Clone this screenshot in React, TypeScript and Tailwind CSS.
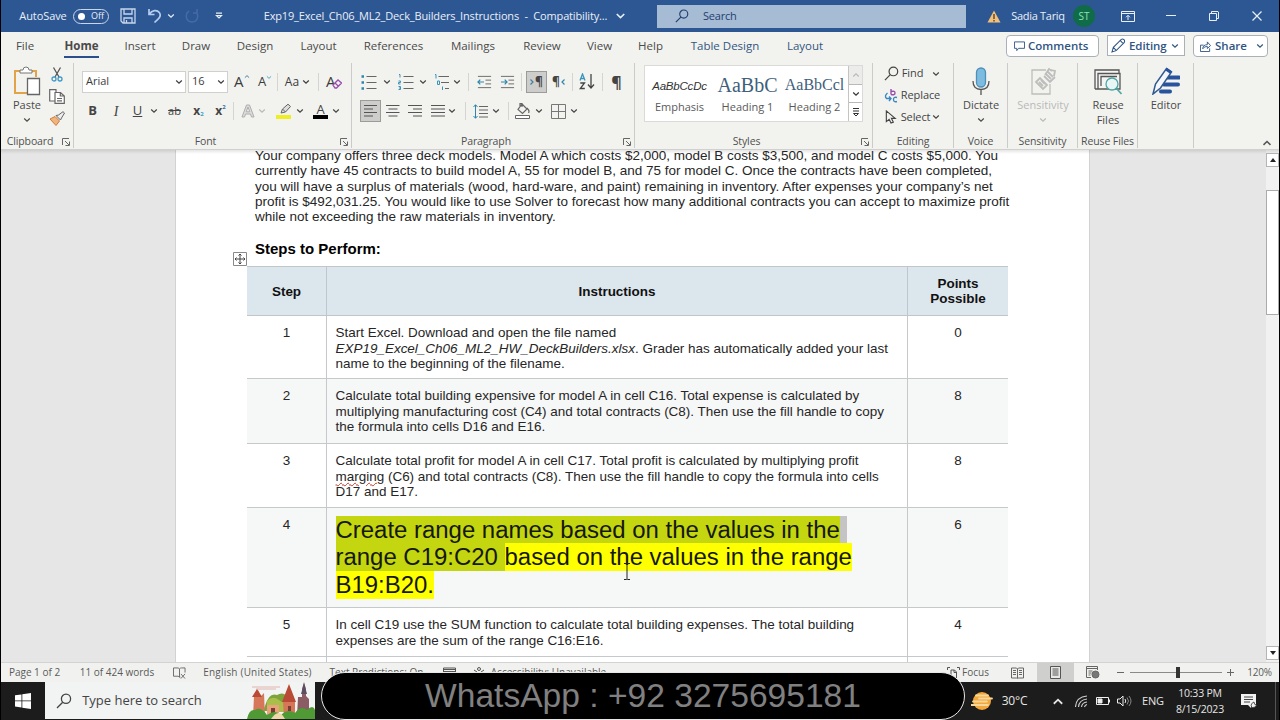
import type { ReactNode } from 'react';
import clsx from 'clsx';

type IconProps = { className?: string };

function Chevron({ className }: IconProps) {
  return (
    <svg viewBox="0 0 8 6" className={clsx('h-[6px] w-[8px] shrink-0', className)} fill="none" stroke="currentColor" strokeWidth="1.200">
      <path d="M1.2 1.5 4 4.2 6.8 1.5" />
    </svg>
  );
}

function Divider({ className }: IconProps) {
  return <div className={clsx('h-[18px] w-px shrink-0 bg-[#d4d4d2]', className)} />;
}

function Label({ className, children }: { className?: string; children: ReactNode }) {
  return <div className={clsx('flex shrink-0 justify-center whitespace-nowrap', className)}>{children}</div>;
}

function SearchIcon({ className }: IconProps) {
  return (
    <svg viewBox="0 0 16 16" className={clsx('shrink-0', className)} fill="none" stroke="currentColor" strokeWidth="1.3">
      <circle cx="10" cy="5.8" r="4.6" />
      <path d="M6.7 9.2 1 15" />
    </svg>
  );
}

function TitleBar() {
  return (
    <header className="flex h-8 shrink-0 items-center bg-[#2d5793] text-[11px] text-[#e9eff8]">
      <Label className="ml-[18px] w-[48px] tracking-[-0.1px]">AutoSave</Label>
      <div className="ml-[6px] flex h-[15px] w-[36px] shrink-0 items-center rounded-full border border-[#c9d6ea] pl-[4px] text-[9px]">
        <span className="h-[7px] w-[7px] rounded-full bg-white" />
        <span className="ml-[6px]">Off</span>
      </div>
      <svg viewBox="0 0 16 16" className="ml-[11px] h-4 w-4 shrink-0" fill="none" stroke="#c8d6ec" strokeWidth="1.3">
        <path d="M1 1h14v14H3l-2-2zM4 1v5h8V1M4 15v-5h8v5M6.500 12v3" />
      </svg>
      <svg viewBox="0 0 16 16" className="ml-[11px] h-4 w-4 shrink-0" fill="none" stroke="#b6cdf0" strokeWidth="1.7">
        <path d="M2 1v5.500h5.500M2.300 6.200C5 2 10 1.500 12.300 4.500c2 2.700.5 5-1.500 6.800L7.500 14.500" />
      </svg>
      <Chevron className="ml-[4px]" />
      <svg viewBox="0 0 16 16" className="ml-[9px] h-4 w-4 shrink-0" fill="none" stroke="#446ba5" strokeWidth="1.6">
        <path d="M13 1v4H9M13 5c2 4 0 9-5 9S1 9 3 5l2-2" />
      </svg>
      <svg viewBox="0 0 8 8" className="ml-[15px] h-2 w-2 shrink-0" fill="none" stroke="currentColor" strokeWidth="1.200">
        <path d="M1 1.200h6M1.500 3.500 4 6l2.500-2.500z" />
      </svg>
      <Label className="ml-[41px] w-[343px] whitespace-pre tracking-[-0.15px]">
        Exp19_Excel_Ch06_ML2_Deck_Builders_Instructions  -  Compatibility...
      </Label>
      <Chevron className="ml-[8px] !h-[8px] !w-[11px]" />
      <div className="ml-[31px] flex h-[23px] w-[309px] shrink-0 items-center bg-[#a6bbd4] text-[#1f3f70]">
        <SearchIcon className="ml-[18px] h-[14px] w-[14px]" />
        <span className="ml-[14px] tracking-[-0.2px]">Search</span>
      </div>
      <svg viewBox="0 0 14 13" className="ml-[21px] h-[13px] w-[14px] shrink-0">
        <path d="M7 .5 13.500 12.500H.5z" fill="#f2c078" />
        <path d="M7 4v5M7 10v1.500" stroke="#4a3a2a" strokeWidth="1.300" />
      </svg>
      <Label className="ml-[11px] w-[52px] tracking-[-0.3px]">Sadia Tariq</Label>
      <div className="ml-[9px] flex h-[22px] w-[22px] shrink-0 items-center justify-center rounded-full bg-[#0f6b48] text-[10px] text-[#8fe0b4]">
        ST
      </div>
      <svg viewBox="0 0 14 11" className="ml-[26px] h-[11px] w-[14px] shrink-0" fill="none" stroke="currentColor">
        <path d="M.5.5h13v10H.5zM.5 2.500h13M7 9V4.500M5 6.300l2-2 2 2" />
      </svg>
      <svg viewBox="0 0 10 10" className="ml-[31px] h-[10px] w-[10px] shrink-0" stroke="currentColor">
        <path d="M0 4.500h10" />
      </svg>
      <svg viewBox="0 0 10 10" className="ml-[33px] h-[10px] w-[10px] shrink-0" fill="none" stroke="currentColor">
        <path d="M.5 2.500h7v7h-7zM2.500 2.500V.5h6.500l.5.5v6.500h-2" />
      </svg>
      <svg viewBox="0 0 10 10" className="ml-[33px] h-[10px] w-[10px] shrink-0" stroke="currentColor" strokeWidth="1.200">
        <path d="m.5.5 9 9M9.500.5l-9 9" />
      </svg>
    </header>
  );
}

const TABS = [
  { label: 'File', cls: 'ml-[15px] w-[18px]' },
  { label: 'Home', cls: 'ml-[30px] w-[35px] font-bold', active: true },
  { label: 'Insert', cls: 'ml-[26px] w-[30px]' },
  { label: 'Draw', cls: 'ml-[27px] w-[28px]' },
  { label: 'Design', cls: 'ml-[26px] w-[38px]' },
  { label: 'Layout', cls: 'ml-[27px] w-[35px]' },
  { label: 'References', cls: 'ml-[28px] w-[59px]' },
  { label: 'Mailings', cls: 'ml-[27px] w-[46px]' },
  { label: 'Review', cls: 'ml-[27px] w-[38px]' },
  { label: 'View', cls: 'ml-[26px] w-[25px]' },
  { label: 'Help', cls: 'ml-[26px] w-[25px]' },
  { label: 'Table Design', cls: 'ml-[27px] w-[70px] text-[#33557f]' },
  { label: 'Layout', cls: 'ml-[27px] w-[36px] text-[#33557f]' },
];

function TabBar() {
  return (
    <nav className="flex h-[31px] shrink-0 items-center text-[11.5px] text-[#4a4a4a]">
      {TABS.map((tab, i) => (
        <div key={i} className={clsx('relative flex h-full shrink-0 items-center justify-center whitespace-nowrap pb-[3px]', tab.cls)}>
          {tab.label}
          {tab.active && <span className="absolute bottom-[5px] left-0 h-[2px] w-full bg-[#2b4f8c]" />}
        </div>
      ))}
      <div className="mb-[3px] ml-auto mr-[11px] flex gap-[8px] font-semibold text-[#2f5582]">
        <div className="flex h-[22px] w-[93px] items-center rounded-sm border border-[#a9b0b8] bg-white pl-[7px]">
          <svg viewBox="0 0 12 11" className="mr-[3px] h-[11px] w-[11px]" fill="none" stroke="currentColor">
            <path d="M.5.5h11v7H5L3 10V7.500H.5z" />
          </svg>
          Comments
        </div>
        <div className="flex h-[21px] w-[78px] items-center border border-[#a9b0b8] bg-white pl-[3px]">
          <svg viewBox="0 0 16 16" className="mr-[3px] h-[15px] w-[15px]" fill="none" stroke="currentColor" strokeWidth="1.100">
            <path d="M1 15 2.500 10 11 1.500q1.500-1 2.800.3T14 5L5.500 13.500zM2.500 10l3 3.200M10 2.800l3 3.200" />
          </svg>
          <span className="tracking-[-0.1px]">Editing</span>
          <Chevron className="ml-[4px]" />
        </div>
        <div className="flex h-[22px] w-[75px] items-center rounded-sm border border-[#a9b0b8] bg-white pl-[6px]">
          <svg viewBox="0 0 12 12" className="mr-[4px] h-[11px] w-[11px]" fill="none" stroke="currentColor">
            <path d="M4 4.500H.5v7h10V8M3 8.500c0-3 2-4.500 5-4.500V1l3.500 4L8 8.200V6C6 6 4.500 6.500 3 8.500z" />
          </svg>
          Share
          <Chevron className="ml-[9px]" />
        </div>
      </div>
    </nav>
  );
}

function Group({ title, width, launcher, children }: { title: string; width: string; launcher?: boolean; children: ReactNode }) {
  return (
    <section className={clsx('flex h-[85px] shrink-0 flex-col border-r border-[#cbcbc9]', width)}>
      <div className="h-[73px]">{children}</div>
      <div className="flex h-[12px] items-center">
        <div className={clsx('flex flex-1 justify-center whitespace-nowrap text-[10.5px] tracking-[-0.1px] text-[#505050]', launcher && 'pr-[3px]')}>
          {title}
        </div>
        {launcher && (
          <svg viewBox="0 0 8 8" className="mr-[3px] h-[8px] w-[8px]" fill="none" stroke="#666">
            <path d="M.5 7V.5H7M3 3l4 4M7.500 3.500v4h-4" />
          </svg>
        )}
      </div>
    </section>
  );
}

function ClipboardGroup() {
  return (
    <Group title="Clipboard" width="w-[73px]" launcher>
      <div className="flex">
        <div className="ml-[11px] flex w-[30px] flex-col items-center text-[11px] text-[#4a4a4a]">
          <svg viewBox="0 0 28 30" className="mt-[3px] h-[30px] w-[28px]" fill="none">
            <path d="M8 5H2v22h13M19 5h4v6" stroke="#e3a348" strokeWidth="2" />
            <path d="M7 7V4h3q0-3 3-3t3 3h3v3z" fill="#fff" stroke="#777" />
            <path d="M14.500 12.500h12v16h-12z" fill="#fff" stroke="#666" strokeWidth="1.300" />
          </svg>
          <span className="mt-[1px] leading-[16px]">Paste</span>
          <Chevron className="mt-[4px]" />
        </div>
        <div className="ml-[7px] flex flex-col items-center gap-[7px] pt-[4px]">
          <svg viewBox="0 0 12 15" className="h-[15px] w-[12px]" fill="none">
            <path d="M2.500.5 8 10M9.500.5 4 10" stroke="#555" strokeWidth="1.300" />
            <circle cx="3" cy="12" r="2" stroke="#3f9ac9" strokeWidth="1.300" />
            <circle cx="9" cy="12" r="2" stroke="#3f9ac9" strokeWidth="1.300" />
          </svg>
          <svg viewBox="0 0 16 15" className="h-[15px] w-[16px]" fill="#fff" stroke="#666" strokeWidth="1.200">
            <path d="M6 12H.7V.7H7V3" />
            <path d="M6 3.500h5.500L15.300 7v7.300H6zM11.300 3.500V7h4M8 9.500h5M8 11.800h5" />
          </svg>
          <svg viewBox="0 0 16 15" className="h-[15px] w-[16px]">
            <path d="m1 8 5-2.500L10.500 10 7 14.500z" fill="#f0b57c" stroke="#d1793a" />
            <path d="m7 4.500 4.500 4.500 1-2L15.500 2 14 .7 9.500 4z" fill="#eee" stroke="#666" />
          </svg>
        </div>
      </div>
    </Group>
  );
}

function FontGroup() {
  return (
    <Group title="Font" width="w-[278px]" launcher>
      <div className="flex h-[37px] items-center pl-[8px] text-[11px] text-[#3c3c3c]">
        <div className="flex h-[22px] w-[104px] items-center justify-between border border-[#d0d0ce] bg-white px-[3px]">
          Arial <Chevron className="-mr-[1px]" />
        </div>
        <div className="ml-[2px] flex h-[22px] w-[40px] items-center justify-between border border-[#d0d0ce] bg-white px-[3px]">
          16 <Chevron className="-mr-[1px]" />
        </div>
        <div className="ml-[6px] flex w-[14px] text-[15px] leading-none">
          A<Chevron className="rotate-180 !h-[5px] !w-[6px] text-[#3a6f9f]" />
        </div>
        <div className="ml-[10px] flex w-[14px] text-[13px] leading-none">
          A<Chevron className="!h-[5px] !w-[6px] text-[#3a9fc0]" />
        </div>
        <Divider className="ml-[5px]" />
        <Label className="ml-[6px] w-[16px] text-[12px]">Aa</Label>
        <Chevron className="ml-[2px]" />
        <Divider className="ml-[8px]" />
        <div className="ml-[7px] flex w-[16px] items-end text-[15px] leading-none">
          A
          <svg viewBox="0 0 10 10" className="-ml-[4px] h-[10px] w-[10px] shrink-0" fill="#f2f2ef" stroke="#9a4fae" strokeWidth="1.300">
            <path d="M1 6 6 1l3.500 3-5 5H3zM3 4l3.500 3.200" />
          </svg>
        </div>
      </div>
      <div className="flex h-[22px] items-center pl-[14px] text-[13px] text-[#444]">
        <Label className="w-[9px] font-bold">B</Label>
        <Label className="ml-[15px] w-[8px] font-['Liberation_Serif'] text-[14px] italic">I</Label>
        <Label className="ml-[13px] w-[9px] underline">U</Label>
        <Chevron className="ml-[8px]" />
        <Label className="ml-[10px] w-[13px] text-[11px] line-through">ab</Label>
        <Label className="ml-[12px] w-[11px] items-end font-bold text-[12px] leading-[16px]">
          x<span className="-mb-[3px] text-[6px] text-[#3a9fc0]">2</span>
        </Label>
        <Label className="ml-[11px] w-[11px] font-bold text-[12px] leading-[16px]">
          x<span className="-mt-[4px] text-[6px] text-[#3a6f9f]">2</span>
        </Label>
        <Divider className="ml-[7px]" />
        <svg viewBox="0 0 14 14" className="ml-[7px] h-[14px] w-[14px] shrink-0" fill="#ddd" stroke="#adadab">
          <path d="M1 13 5.500 1h3L13 13h-2.500l-1-3h-5l-1 3zM5.200 7.800h3.600L7 3z" />
        </svg>
        <Chevron className="ml-[3px] text-[#b9b9b7]" />
        <svg viewBox="0 0 18 16" className="ml-[9px] h-[16px] w-[18px] shrink-0" fill="none">
          <path d="M1 12h15v4H1z" fill="#eeee22" />
          <path d="m6 10 1.500-4L13 1.200l2.500 2.300-5 5.500zM7.500 6l3 3" fill="#ddd" stroke="#666" />
        </svg>
        <Chevron className="ml-[3px]" />
        <div className="ml-[9px] flex w-[15px] flex-col items-center">
          <span className="text-[13px] leading-[12px]">A</span>
          <span className="h-[4px] w-full bg-black" />
        </div>
        <Chevron className="ml-[4px]" />
      </div>
    </Group>
  );
}

function ListIcon({ className, numbered }: { className?: string; numbered?: boolean }) {
  return (
    <svg viewBox="0 0 16 16" className={clsx('h-[16px] w-[16px] shrink-0', className)} fill="none" stroke="#666">
      <path d="M5.500 2.500H15.500M5.500 8.500H15.500M5.500 14.500H15.500" />
      {numbered ? (
        <path d="M1 .5h1v3M.5 7h2v1.500h-2V10h2M.5 12.500h2v3h-2M1 14h1.500" stroke="#3a93b8" />
      ) : (
        <path d="M.5 2.500h2.500M.5 8.500h2.500M.5 14.500h2.500" stroke="#2f86ad" strokeWidth="2.500" />
      )}
    </svg>
  );
}

// d holds the four text lines of each alignment
function AlignIcon({ d, className }: { d: string; className?: string }) {
  return (
    <svg viewBox="0 0 14 14" className={clsx('h-[14px] w-[14px] shrink-0', className)} fill="none" stroke="#555" strokeWidth="1.200">
      <path d={d} />
    </svg>
  );
}

function IndentIcon({ className, out }: { className?: string; out?: boolean }) {
  return (
    <svg viewBox="0 0 16 14" className={clsx('h-[14px] w-[15px] shrink-0', className)} fill="none" stroke="#666">
      <path d="M1 1h14M9 5h6M9 9h6M1 13h14" />
      <path d={out ? 'M7.500 7H1M3.500 4.500 1 7l2.500 2.500' : 'M1 7h6.500M5 4.500 7.500 7 5 9.500'} stroke="#2f86ad" strokeWidth="1.300" />
    </svg>
  );
}

function ParagraphGroup() {
  return (
    <Group title="Paragraph" width="w-[283px]" launcher>
      <div className="flex h-[37px] items-center pl-[9px] text-[#444]">
        <ListIcon />
        <Chevron className="ml-[6px]" />
        <ListIcon numbered className="ml-[7px]" />
        <Chevron className="ml-[5px]" />
        <svg viewBox="0 0 16 16" className="ml-[7px] h-[16px] w-[16px] shrink-0" fill="none" stroke="#666">
          <path d="M4.500 2.500H15M7 8.500h8M11 14.500h4" />
          <path d="M1 .5h1v4M3.500 7h2v3.500h-2zM8.500 12.500v4" stroke="#3a93b8" />
        </svg>
        <Chevron className="ml-[3px]" />
        <Divider className="ml-[7px]" />
        <IndentIcon out className="ml-[8px]" />
        <IndentIcon className="ml-[8px]" />
        <Divider className="ml-[6px]" />
        <div className="ml-[4px] flex h-[22px] w-[21px] shrink-0 items-center justify-center gap-px border border-[#9b9b99] bg-[#cdcdcb] text-[12px] font-bold">
          <svg viewBox="0 0 4 6" className="h-[6px] w-[4px]" fill="none" stroke="#3f7f9f" strokeWidth="1.200">
            <path d="m.5.5 2.500 2.500-2.500 2.500" />
          </svg>
          ¶
        </div>
        <Label className="ml-[5px] w-[13px] items-center gap-px text-[12px] font-bold">
          ¶
          <svg viewBox="0 0 4 6" className="h-[6px] w-[4px]" fill="none" stroke="#2f86ad" strokeWidth="1.200">
            <path d="M3.500.5 1 3l2.500 2.500" />
          </svg>
        </Label>
        <Divider className="ml-[7px]" />
        <div className="ml-[6px] flex w-[16px] shrink-0 items-center">
          <svg viewBox="0 0 16 17" className="h-[17px] w-[16px]" fill="none" strokeWidth="1.300">
            <path d="M1 7.500 3.500 1 6 7.500M2 5.500h3" stroke="#3a93b8" />
            <path d="M1.300 10h4.200L1.300 15.500h4.500M12 1v14M9 11.500l3 3.500 3-3.500" stroke="currentColor" />
          </svg>
        </div>
        <Divider className="ml-[7px]" />
        <Label className="ml-[8px] w-[11px] text-[16px] font-bold leading-none">¶</Label>
      </div>
      <div className="flex h-[22px] items-center pl-[8px] text-[#444]">
        <div className="flex h-[22px] w-[21px] shrink-0 items-center justify-center border border-[#9b9b99] bg-[#cdcdcb]">
          <AlignIcon d="M0 1.500h13M0 5h9M0 8.500h13M0 12h9" />
        </div>
        <AlignIcon className="ml-[5px]" d="M0 1.500h13.500M2.500 5h9M0 8.500h13.500M2.500 12h9" />
        <AlignIcon className="ml-[8px]" d="M0 1.500h14M5 5h9M0 8.500h14M5 12h9" />
        <AlignIcon className="ml-[9px]" d="M0 1.500h14M0 5h14M0 8.500h14M0 12h14" />
        <Chevron className="ml-[3px]" />
        <Divider className="ml-[9px]" />
        <svg viewBox="0 0 15 15" className="ml-[7px] h-[15px] w-[15px] shrink-0" fill="none" stroke="#666">
          <path d="M6 2.500h9M6 6h9M6 9.500h9M6 13h9" />
          <path d="M2.500 1v13M.5 3l2-2.300L4.500 3M.5 12l2 2.300 2-2.300" stroke="#2f86ad" />
        </svg>
        <Chevron className="ml-[4px]" />
        <Divider className="ml-[8px]" />
        <svg viewBox="0 0 16 16" className="ml-[6px] h-[16px] w-[16px] shrink-0" fill="none" stroke="#666">
          <path d="M.5 12.500h14v3H.5z" fill="#fff" />
          <path d="m7 1 5 5-4.500 4.500-4.500-4zM5 3v-2.500h2V4M12 5q3 3 1.500 5" strokeWidth="1.200" />
        </svg>
        <Chevron className="ml-[4px]" />
        <svg viewBox="0 0 15 15" className="ml-[8px] h-[15px] w-[15px] shrink-0" fill="none" stroke="#777">
          <path d="M.5.5h14v14H.5zM7.500.5v14M.5 7.500h14" />
        </svg>
        <Chevron className="ml-[4px]" />
      </div>
    </Group>
  );
}

function StylesGroup() {
  return (
    <Group title="Styles" width="w-[238px]" launcher>
      <div className="ml-[9px] mt-[2px] flex h-[57px] w-[219px] border border-[#dadad8] bg-white text-[11px] text-[#5a5a5a]">
        <div className="flex w-[69px] flex-col items-center">
          <Label className="mt-[8px] h-[24px] w-[56px] font-['Liberation_Sans'] text-[11.5px] italic leading-[24px] tracking-[-0.2px] text-[#333]">
            AaBbCcDc
          </Label>
          <span className="mt-[1px]">Emphasis</span>
        </div>
        <div className="flex w-[67px] flex-col items-center">
          <Label className="mt-[7px] h-[24px] w-[57px] font-['Liberation_Serif'] text-[20px] leading-[24px] text-[#3f5f7c]">
            AaBbC
          </Label>
          <span className="mt-[2px]">Heading 1</span>
        </div>
        <div className="flex w-[67px] flex-col items-center">
          <Label className="mt-[7px] h-[24px] w-[56px] font-['Liberation_Serif'] text-[16px] leading-[24px] text-[#3f5f7c]">
            AaBbCcl
          </Label>
          <span className="mt-[2px]">Heading 2</span>
        </div>
        <div className="ml-auto flex w-[14px] flex-col border-l border-[#c4c4c2] text-[#333]">
          <div className="flex flex-1 items-center justify-center bg-[#ececea] text-[#bbb]">
            <Chevron className="rotate-180" />
          </div>
          <div className="flex flex-1 items-center justify-center border-y border-[#b9b9b7]">
            <Chevron />
          </div>
          <div className="flex flex-1 items-center justify-center">
            <svg viewBox="0 0 8 9" className="h-[9px] w-[8px]" fill="none" stroke="currentColor">
              <path d="M1 .5h6M1 3h6M1.500 5.500 4 8l2.500-2.500z" />
            </svg>
          </div>
        </div>
      </div>
    </Group>
  );
}

function EditingGroup() {
  return (
    <Group title="Editing" width="w-[81px]">
      <div className="flex flex-col pl-[11px] text-[11px] tracking-[-0.1px] text-[#444]">
        <div className="flex h-[21px] items-center">
          <SearchIcon className="mr-[2px] h-[15px] w-[15px]" />
          <Label className="w-[23px]">Find</Label>
          <Chevron className="ml-[8px]" />
        </div>
        <div className="flex h-[22px] items-center">
          <svg viewBox="0 0 14 15" className="mr-[3px] h-[15px] w-[14px]" fill="none" strokeWidth="1.400">
            <path d="M7 1v5.500M7 3.500q4-1 4 1.500t-4 1.500" stroke="#9a4fae" />
            <path d="M13 9.500q-3.500-1-3.500 2t3.500 2M3.500 5Q0 8 2.500 10.500h4.500M5 8.500l2 2-2 2.500" stroke="#3a86c0" />
          </svg>
          <Label className="w-[39px]">Replace</Label>
        </div>
        <div className="flex h-[22px] items-center">
          <svg viewBox="0 0 14 15" className="mr-[3px] h-[14px] w-[14px]" fill="none" stroke="#444" strokeWidth="1.200">
            <path d="M2 1v11.500l3-2.500 2 4 2.500-1-2-4h4z" />
          </svg>
          <Label className="w-[29px]">Select</Label>
          <Chevron className="ml-[2px]" />
        </div>
      </div>
    </Group>
  );
}

function BigButton({ icon, label, chevron, className }: { icon: ReactNode; label: ReactNode; chevron?: boolean; className?: string }) {
  return (
    <div className={clsx('flex flex-col items-center whitespace-nowrap pl-px text-center text-[11px] leading-[15px] text-[#4a4a4a]', className)}>
      <div className="flex h-[34px] items-center pt-[1px]">{icon}</div>
      {label}
      {chevron && <Chevron className="mt-[5px]" />}
    </div>
  );
}

function Ribbon() {
  return (
    <div className="flex h-[87px] shrink-0 border-b border-[#d0d0ce]">
      <ClipboardGroup />
      <FontGroup />
      <ParagraphGroup />
      <StylesGroup />
      <EditingGroup />
      <Group title="Voice" width="w-[54px]">
        <BigButton
          label="Dictate"
          chevron
          icon={
            <svg viewBox="0 0 18 28" className="h-[28px] w-[18px]" fill="none" stroke="#555" strokeWidth="1.300">
              <rect x="4.500" y="1" width="9" height="19" rx="4.500" fill="#7dbbe0" stroke="#4f8fb8" />
              <path d="M1 14q0 8.500 8 8.500t8-8.500M9 22.500V28" />
            </svg>
          }
        />
      </Group>
      <Group title="Sensitivity" width="w-[70px]">
        <BigButton
          label="Sensitivity"
          chevron
          className="!text-[#b9b9b7]"
          icon={
            <svg viewBox="0 0 28 28" className="h-[28px] w-[28px]" fill="none" stroke="#bdbdbb" strokeWidth="1.300">
              <path d="M17 3H3v24h18V17" />
              <path d="m7 15 4-4 7 7-4 4zM10 15l4 4M12 13l4 4" strokeWidth="1.800" />
              <path d="m15 9 6 6 5-5M17 7l5 5M19 5l5 5M16 8l4-6 3 2M22 3l4 1-1 5" strokeWidth="1.800" />
            </svg>
          }
        />
      </Group>
      <Group title="Reuse Files" width="w-[60px]">
        <BigButton
          label={
            <>
              Reuse
              <br />
              Files
            </>
          }
          icon={
            <svg viewBox="0 0 28 26" className="mt-[3px] h-[26px] w-[28px]" fill="none" stroke="#555" strokeWidth="1.300">
              <path d="M1 20V1h24v3M1 20h3M4 20V4.500h22V20H4" fill="#f4f4f2" />
              <path d="M7 17V7.500h16" />
              <circle cx="18" cy="15" r="6" fill="#e8f7f6" stroke="#4fa5a5" />
              <path d="m22.500 19.500 5 5.500" stroke="#4fa5a5" strokeWidth="1.600" />
            </svg>
          }
        />
      </Group>
      <Group title="" width="w-[56px]">
        <BigButton
          label="Editor"
          icon={
            <svg viewBox="0 0 28 28" className="h-[28px] w-[28px]" fill="none" stroke="#27549c">
              <path d="M14 10.500h13M12 17.500h14M9 24.500h9" strokeWidth="4" strokeLinecap="round" />
              <path d="M1 27 3.500 17 14.500 1.500 19.500 5 8.500 21z" fill="#f5f7fb" stroke="#32598f" strokeWidth="1.500" />
              <path d="m14 2 5 3.500" strokeWidth="3" />
            </svg>
          }
        />
      </Group>
      <Chevron className="ml-auto mr-[7px] mt-[76px] !h-[8px] !w-[10px] rotate-180 text-[#555]" />
    </div>
  );
}

type Step = { id: number; points: number; height: string; body: ReactNode };

const STEPS: Step[] = [
  {
    id: 1,
    points: 0,
    height: 'h-[63px]',
    body: (
      <>
        Start Excel. Download and open the file named
        <br />
        <i>EXP19_Excel_Ch06_ML2_HW_DeckBuilders.xlsx</i>. Grader has automatically added your last
        <br />
        name to the beginning of the filename.
      </>
    ),
  },
  {
    id: 2,
    points: 8,
    height: 'h-[65px] bg-[#f6f7f7]',
    body: (
      <>
        Calculate total building expensive for model A in cell C16. Total expense is calculated by
        <br />
        multiplying manufacturing cost (C4) and total contracts (C8). Then use the fill handle to copy
        <br />
        the formula into cells D16 and E16.
      </>
    ),
  },
  {
    id: 3,
    points: 8,
    height: 'h-[64px]',
    body: (
      <>
        Calculate total profit for model A in cell C17. Total profit is calculated by multiplying profit
        <br />
        <span className="underline decoration-[#c0392b] decoration-wavy decoration-[1px] underline-offset-1">marging</span> (C6) and total
        contracts (C8). Then use the fill handle to copy the formula into cells
        <br />
        D17 and E17.
      </>
    ),
  },
  {
    id: 4,
    points: 6,
    height: 'h-[100px] bg-[#f6f7f7]',
    body: (
      <div className="-mt-[1px] text-[23.95px] leading-[28px] text-[#15180a]">
        <div className="flex h-[27px]">
          <span className="bg-[#c3d60f]">Create range names based on the values in the</span>
          <span className="w-[7px] bg-[#c4c4c4]" />
        </div>
        <div className="flex h-[28px]">
          <span className="whitespace-pre bg-[#c3d60f]">range C19:C20 </span>
          <span className="bg-[#feff00]">based on the values in the range</span>
        </div>
        <div className="flex h-[28px]">
          <span className="bg-[#feff00]">B19:B20.</span>
        </div>
      </div>
    ),
  },
  {
    id: 5,
    points: 4,
    height: 'h-[49px]',
    body: (
      <>
        In cell C19 use the SUM function to calculate total building expenses. The total building
        <br />
        expenses are the sum of the range C16:E16.
      </>
    ),
  },
];

function StepsTable() {
  return (
    <div className="ml-[71px] w-[761px] text-[13.480px] leading-[15.3px]">
      <div className="flex h-[50px] items-center border-y border-[#bfc7cc] bg-[#dce6ed] text-center font-bold text-[#111]">
        <div className="w-[79px]">Step</div>
        <div className="flex h-full w-[582px] items-center justify-center border-x border-[#bfc7cc]">Instructions</div>
        <div className="w-[100px]">
          Points
          <br />
          Possible
        </div>
      </div>
      {STEPS.map((step) => (
        <div key={step.id} className={clsx('flex border-b border-[#c6c9ca]', step.height)}>
          <div className="w-[79px] pt-[9px] text-center">{step.id}</div>
          <div className="w-[582px] whitespace-nowrap border-x border-[#c6c9ca] pl-[8.500px] pt-[9px]">{step.body}</div>
          <div className="w-[100px] pt-[9px] text-center">{step.points}</div>
        </div>
      ))}
      <div className="flex h-3">
        <div className="w-[79px]" />
        <div className="w-[582px] border-x border-[#c6c9ca]" />
      </div>
    </div>
  );
}

function DocumentArea() {
  return (
    <main className="relative flex h-[512px] shrink-0 overflow-hidden bg-[#e6e6e6] font-['Liberation_Sans',Arial,sans-serif] text-[#262626]">
      <div className="ml-[174px] w-[915px] shrink-0 border-x border-[#d2d2d2] bg-white">
        <p className="-mt-[2px] ml-[79px] whitespace-nowrap text-[13.5px] leading-[15.3px]">
          Your company offers three deck models. Model A which costs $2,000, model B costs $3,500, and model C costs $5,000. You
          <br />
          currently have 45 contracts to build model A, 55 for model B, and 75 for model C. Once the contracts have been completed,
          <br />
          you will have a surplus of materials (wood, hard-ware, and paint) remaining in inventory. After expenses your company’s net
          <br />
          profit is $492,031.25. You would like to use Solver to forecast how many additional contracts you can accept to maximize profit
          <br />
          while not exceeding the raw materials in inventory.
        </p>
        <div className="mt-[15px] flex h-[27px]">
          <svg viewBox="0 0 14 14" className="ml-[57px] mt-[13px] h-[14px] w-[14px]" fill="#fff" stroke="#8a8a8a">
            <path d="M.5.5h13v13H.5z" />
            <path d="M7 2v10M2 7h10M5.500 3.500 7 2l1.500 1.500M5.500 10.500 7 12l1.500-1.500M3.500 5.500 2 7l1.500 1.500M10.500 5.500 12 7l-1.500 1.500" stroke="#444" fill="none" />
          </svg>
          <h2 className="ml-[8px] text-[15px] font-bold leading-[19px] text-black">Steps to Perform:</h2>
        </div>
        <StepsTable />
      </div>
      <div className="ml-auto flex w-[13px] flex-col bg-[#f1f1f1] pt-[3px]">
        <div className="flex h-[14px] items-center justify-center border border-[#b5b5b5] bg-white">
          <svg viewBox="0 0 6 4" className="h-[4px] w-[6px]">
            <path d="M3 0 6 4H0z" fill="#222" />
          </svg>
        </div>
        <div className="mt-[23px] h-[125px] border border-[#ababab] bg-white" />
        <div className="mb-[2px] mt-auto flex h-[14px] items-center justify-center border border-[#b5b5b5] bg-white">
          <svg viewBox="0 0 6 4" className="h-[4px] w-[6px]">
            <path d="M0 0h6L3 4z" fill="#222" />
          </svg>
        </div>
      </div>
      <div className="pointer-events-none absolute inset-x-0 top-0 h-[4px] bg-gradient-to-b from-black/10 to-transparent" />
      {/* text cursor */}
      <svg viewBox="0 0 8 17" className="absolute left-[622px] top-[413px] h-[17px] w-[8px]" fill="none" stroke="#222">
        <path d="M1 .5h2.500l.5.500.5-.5H7M4 1v15M1 16.500h2.500L4 16l.5.500H7" />
      </svg>
    </main>
  );
}

function StatusBar() {
  return (
    <div className="flex h-[20px] shrink-0 items-center border-t border-[#d3d3d1] bg-[#f1f2ef] text-[10px] text-[#5a5a5a]">
      <Label className="ml-[7px] w-[53px]">Page 1 of 2</Label>
      <Label className="ml-[18px] w-[76px]">11 of 424 words</Label>
      <svg viewBox="0 0 14 13" className="ml-[18px] h-[12px] w-[13px] shrink-0" fill="none" stroke="#666">
        <path d="M7 2v9L5.500 10H.5V1h5zq1-1 2-1h4v5M8.500 7.500l4.500 5M13 7.500l-4.500 5M7 11h1" />
      </svg>
      <Label className="ml-[17px] w-[109px] tracking-[0.2px]">English (United States)</Label>
      <Label className="ml-[17px] w-[95px]">Text Predictions: On</Label>
      <svg viewBox="0 0 13 12" className="ml-[19px] h-[12px] w-[13px] shrink-0" fill="none" stroke="#555">
        <path d="M.5 1v10h12V1zM.5 2.500h12M.5 4.500h12" />
      </svg>
      <svg viewBox="0 0 12 12" className="ml-[17px] h-[12px] w-[12px] shrink-0" fill="none" stroke="#555">
        <circle cx="6" cy="2" r="1.500" />
        <path d="M1 3l3 2v6l2-3 2 3V5l3-2" />
      </svg>
      <Label className="ml-[5px] w-[117px]">Accessibility: Unavailable</Label>
      <svg viewBox="0 0 13 12" className="ml-auto h-[12px] w-[13px] shrink-0" fill="none" stroke="#555">
        <path d="M.5 3V.5H3M10 .5h2.500V3M4 11V3h3.500L9.500 5v6M7 3v2.500h2.500" />
      </svg>
      <Label className="ml-[2px] w-[27px]">Focus</Label>
      <svg viewBox="0 0 13 12" className="ml-[22px] h-[12px] w-[13px] shrink-0" fill="none" stroke="#666">
        <path d="M.5 1h5l1 1 1-1h5v10h-5l-1 .5-1-.5h-5zM6.500 2v9M2 3.500h3M2 5.500h3M2 7.500h3M8 3.500h3M8 5.500h3M8 7.500h3" />
      </svg>
      <div className="ml-[13px] flex h-full w-[37px] shrink-0 items-center justify-center bg-[#cfcfcd]">
        <svg viewBox="0 0 11 13" className="h-[13px] w-[11px]" fill="#e8e8e6" stroke="#555">
          <path d="M.5.5h10v12H.5zM2.500 3h6M2.500 5h6M2.500 7h6M2.500 9h6" />
        </svg>
      </div>
      <svg viewBox="0 0 14 13" className="ml-[12px] h-[13px] w-[14px] shrink-0" fill="none" stroke="#666">
        <path d="M5 11.500H.5v-11h11V4M.5 2.500h11M2.500 5h4M2.500 7h3M2.500 9h2" />
        <circle cx="9.500" cy="8.500" r="3.500" fill="#777" />
      </svg>
      <div className="ml-[17px] h-px w-[7px] bg-[#666]" />
      <div className="ml-[6px] flex w-[92px] shrink-0 items-center">
        <div className="h-px w-[46px] bg-[#8a8a8a]" />
        <div className="h-[11px] w-[4px] bg-[#333]" />
        <div className="h-px flex-1 bg-[#8a8a8a]" />
      </div>
      <svg viewBox="0 0 7 7" className="ml-[5px] h-[7px] w-[7px] shrink-0" stroke="#666">
        <path d="M3.500 0v7M0 3.500h7" />
      </svg>
      <Label className="ml-[13px] mr-[7px] w-[25px] tracking-[-0.2px]">120%</Label>
    </div>
  );
}

function CastleArt() {
  return (
    <svg viewBox="0 0 68 37" className="h-[37px] w-[68px]">
      <path d="M5 5h28M9 7h20" stroke="#e3b4ae" />
      <path d="M18 24q4-14 12-11 6-4 11 2 6 3 4 14H16z" fill="#7ea33a" />
      <path d="M20 19q6-6 12-1t10 0v12H20z" fill="#a9bf4a" />
      <path d="M7 14l4-6 3 6 3-3 1 24H6zM36 20l6-16 6 16v16H37z" fill="#d6775a" />
      <path d="M5 15l5-8 5 8zM35 20l7-18 7 18z" fill="#b94a35" />
      <path d="M51 15h4V7l2-7 2 7v7l3 3v18H50z" fill="#8a5c64" />
      <path d="M54 12l3-11 3 11z" fill="#5b4e63" />
      <path d="M20 23h12v11H20z" fill="#e8a37c" />
      <path d="M24 26h4v8h-4zM41 24h3v5h-3z" fill="#7b3b31" />
      <path d="M0 37q2-10 8-9 6-4 12 5 8-6 14 0 7-7 14-2 6-8 12-3 6-6 8 0v9z" fill="#4f9a35" />
      <path d="M24 37q8-12 14 0z" fill="#f0d9a8" />
    </svg>
  );
}

function Taskbar() {
  return (
    <footer className="flex h-[38px] shrink-0 items-center bg-[#1c1c1c] text-[#e6e6e6]">
      <div className="flex w-[44px] shrink-0 justify-center">
        <svg viewBox="0 0 16 16" className="h-[16px] w-[16px]" fill="#fff">
          <path d="M0 2.300 6.500 1.400v6.100H0zM7.300 1.300 16 0v7.500H7.300zM0 8.300h6.500v6.200L0 13.600zM7.300 8.300H16V16l-8.700-1.300z" />
        </svg>
      </div>
      <div className="mb-px flex h-[37px] w-[270px] shrink-0 items-center bg-[#f2f3f3] text-[#444]">
        <SearchIcon className="ml-[11px] h-[16px] w-[16px]" />
        <Label className="ml-[10px] w-[120px] pt-px text-[13px]">Type here to search</Label>
        <div className="ml-auto">
          <CastleArt />
        </div>
      </div>
      <svg viewBox="0 0 22 20" className="ml-auto h-[20px] w-[22px] shrink-0">
        <circle cx="11" cy="10" r="9" fill="#f4a83c" />
        <path d="M5 4.500h12M8 7.500h13M2 10.500h14M0 14h17" stroke="#f8d79a" strokeWidth="1.800" strokeLinecap="round" />
      </svg>
      <Label className="ml-[8px] w-[27px] text-[12px] tracking-[-0.2px]">30°C</Label>
      <Chevron className="ml-[24px] !h-[9px] !w-[12px] rotate-180" />
      <svg viewBox="0 0 13 13" className="ml-[11px] h-[13px] w-[13px] shrink-0" fill="none" stroke="#cfcfcf" strokeWidth="1.100">
        <path d="M.5 12Q1 2 12 1M3.500 12q.5-7 8.500-8M6.500 12q.5-4.500 5.500-5M9.500 12q.5-2 2.500-2.500" />
      </svg>
      <svg viewBox="0 0 14 8" className="ml-[8px] h-[8px] w-[14px] shrink-0" fill="none" stroke="#eee">
        <path d="M.5.5h12v7H.5zM13.500 2.500v3" />
        <path d="M2 2h4v4H2z" fill="#eee" />
      </svg>
      <svg viewBox="0 0 15 12" className="ml-[7px] h-[12px] w-[15px] shrink-0" fill="none" stroke="#eee">
        <path d="M.5 4h2.500l3-3v10L3 8H.5zM8 4q1.500 2 0 4" />
        <path d="M10 2.500q3 3.500 0 7M12 1q4 5 0 10" stroke="#888" />
      </svg>
      <Label className="ml-[10px] w-[22px] text-[11px] tracking-[-0.2px]">ENG</Label>
      <div className="ml-[10px] flex w-[52px] shrink-0 flex-col items-center whitespace-nowrap text-[10.500px] leading-[16.500px] tracking-[-0.2px]">
        <span>10:33 PM</span>
        <span>8/15/2023</span>
      </div>
      <svg viewBox="0 0 16 16" className="ml-[15px] mr-[18px] h-[16px] w-[16px] shrink-0">
        <path d="M0 1h15v11h-4l-1 3-3-3H0z" fill="#f3f3f3" />
        <path d="M3 4h9M3 6.500h9M3 9h6" stroke="#444" />
        <path d="M10 13q0-3 3-4 0 3 2.500 3-1 3-4 2.500z" fill="#f3f3f3" stroke="#333" strokeWidth=".8" />
      </svg>
      <div className="mr-[3px] h-full w-px bg-[#555]" />
    </footer>
  );
}

export default function App() {
  return (
    <div className="relative h-[720px] w-[1280px] overflow-hidden border-x border-black bg-[#f2f3ef] font-['Open_Sans','Noto_Sans',sans-serif]">
      <div className="flex h-full flex-col">
        <TitleBar />
        <TabBar />
        <Ribbon />
        <DocumentArea />
        <StatusBar />
        <Taskbar />
      </div>
      <div className="absolute left-[320px] top-[672px] flex h-[48px] w-[644px] items-center justify-center rounded-[24px] border border-[#e8e8e8] bg-black font-['Liberation_Sans',Arial,sans-serif] text-[33.6px] text-[#808080]">
        <span className="whitespace-nowrap">WhatsApp : +92 3275695181</span>
      </div>
    </div>
  );
}
